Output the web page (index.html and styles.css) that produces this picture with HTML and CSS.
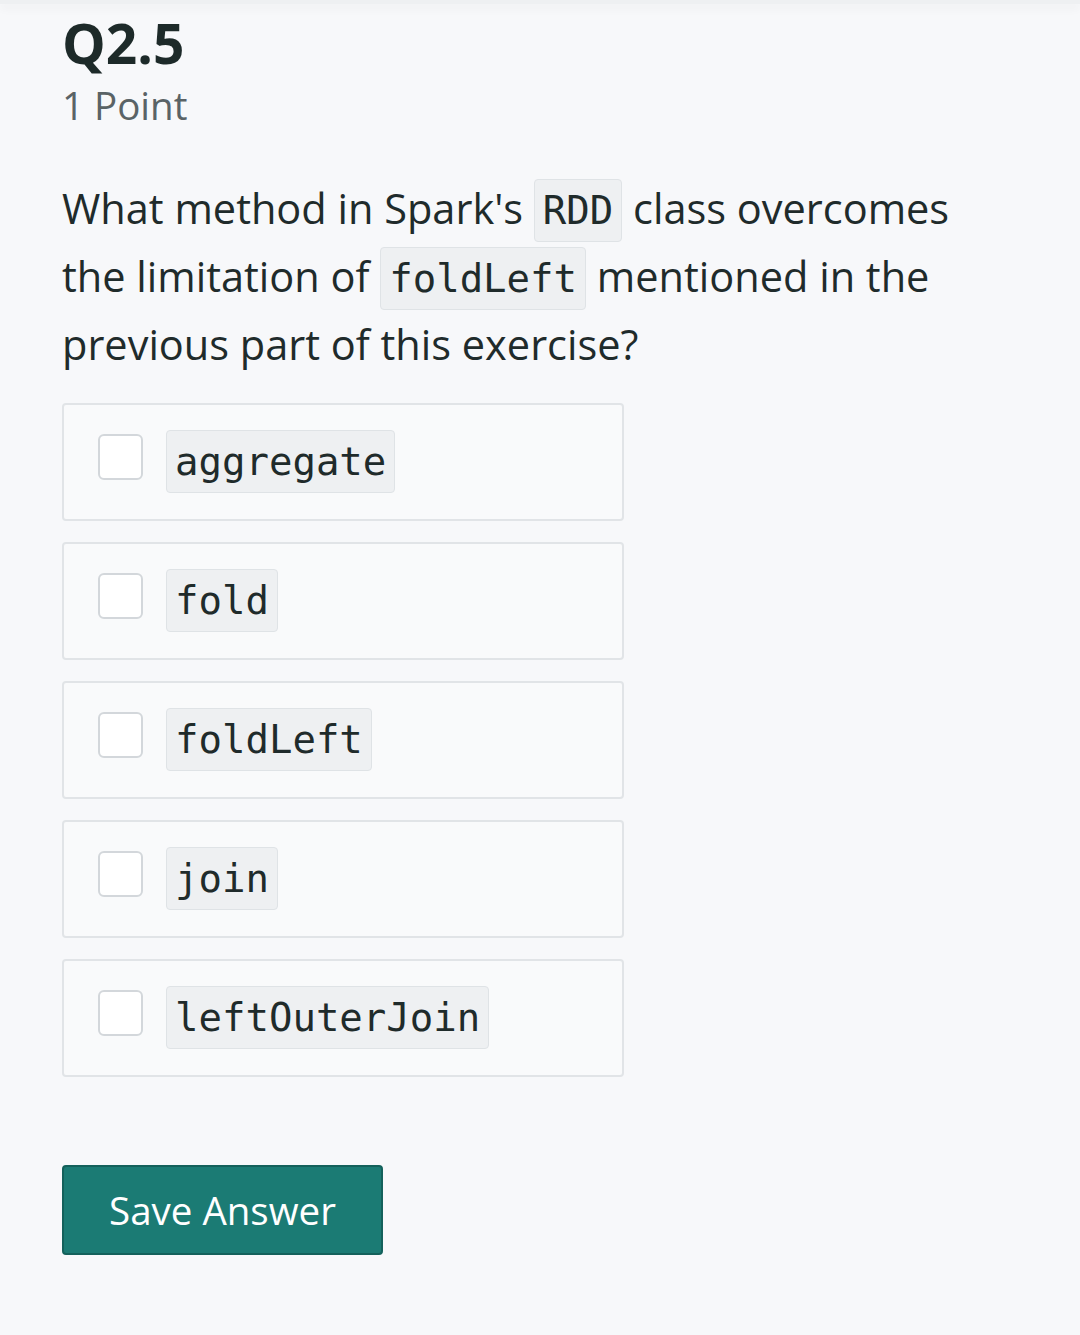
FILE: index.html
```html
<!DOCTYPE html>
<html>
<head>
    <title>Q2.5</title>
    <link rel="stylesheet" href="styles.css">
</head>
<body>

<div class="top-bar"></div>

<div class="question">
    <h1 class="question-title">Q2.5</h1>
    <div class="question-points">1 Point</div>

    <p class="question-text">
        What method in Spark's <code>RDD</code> class overcomes the limitation of <code>foldLeft</code> mentioned in the previous part of this exercise?
    </p>

    <div class="options">
        <label class="option">
            <span class="checkbox"></span>
            <code>aggregate</code>
        </label>
        <label class="option">
            <span class="checkbox"></span>
            <code>fold</code>
        </label>
        <label class="option">
            <span class="checkbox"></span>
            <code>foldLeft</code>
        </label>
        <label class="option">
            <span class="checkbox"></span>
            <code>join</code>
        </label>
        <label class="option">
            <span class="checkbox"></span>
            <code>leftOuterJoin</code>
        </label>
    </div>

    <button class="save-answer">Save Answer</button>
</div>

</body>
</html>
```

FILE: styles.css
```css
/* Page basics */
body {
    margin: 0;
    background-color: #f7f8fa;
    font-family: "Open Sans", "Lato", sans-serif;
    color: #1f2b2b;
}

/* Faint shadow of the header above */
.top-bar {
    height: 4px;
    background-color: #eef0f2;
    box-shadow: 0 4px 10px rgba(0, 0, 0, 0.06);
}

.question {
    padding: 0 62px;
}

.question-title {
    font-size: 55px;
    font-weight: 700;
    line-height: 1;
    margin: 11px 0 0 0;
    color: #1d2a29;
}

.question-points {
    font-size: 38.5px;
    line-height: 1;
    margin-top: 16px;
    color: #5a6366;
}

.question-text {
    font-size: 41.5px;
    line-height: 68px;
    margin: 49px 0 25px 0;
}

/* Inline code chips */
code {
    display: inline-block;
    font-family: "DejaVu Sans Mono", monospace;
    font-size: 39px;
    line-height: 45px;
    background-color: #eef0f2;
    border: 1px solid #dfe3e6;
    border-radius: 4px;
    padding: 8px 8px;
    color: #1f2b2b;
}

/* Answer options */
.options {
    display: flex;
    flex-direction: column;
    gap: 21px;
    width: 562px;
}

.option {
    display: flex;
    align-items: center;
    height: 118px;
    box-sizing: border-box;
    padding-left: 34px;
    background-color: #f9fafb;
    border: 2px solid #e1e4e7;
    border-radius: 4px;
    cursor: pointer;
}

.checkbox {
    width: 45px;
    height: 46px;
    box-sizing: border-box;
    margin-right: 23px;
    margin-bottom: 10px;
    background-color: #fff;
    border: 2px solid #d3d7db;
    border-radius: 6px;
}

/* Save button */
.save-answer {
    display: block;
    margin-top: 88px;
    width: 321px;
    height: 90px;
    font-family: "Open Sans", "Lato", sans-serif;
    font-size: 38.5px;
    color: #fff;
    background-color: #1b7b74;
    border: 2px solid #14615b;
    border-radius: 4px;
    cursor: pointer;
}
```
